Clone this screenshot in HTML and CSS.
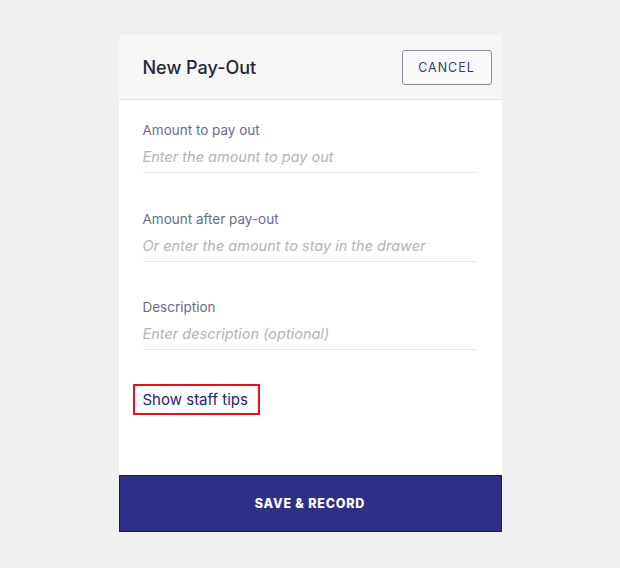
FILE: index.html
```html
<!DOCTYPE html>
<html>
<head>
<meta charset="utf-8">
<link rel="stylesheet" href="styles.css">
</head>
<body>
<div class="card">
  <div class="header">
    <h1 class="title">New Pay-Out</h1>
    <button class="cancel">CANCEL</button>
  </div>
  <div class="body">
    <div class="field">
      <div class="label">Amount to pay out</div>
      <div class="input">Enter the amount to pay out</div>
    </div>
    <div class="field">
      <div class="label">Amount after pay-out</div>
      <div class="input">Or enter the amount to stay in the drawer</div>
    </div>
    <div class="field">
      <div class="label">Description</div>
      <div class="input">Enter description (optional)</div>
    </div>
    <a class="tips">Show staff tips</a>
  </div>
  <button class="save">SAVE &amp; RECORD</button>
</div>
</body>
</html>
```
FILE: styles.css
```css
html, body {
  margin: 0;
  padding: 0;
  background: #f0f0f0;
  font-family: "Inter", "Lato", sans-serif;
}
body {
  height: 568px;
  padding-top: 35px;
  box-sizing: border-box;
}
.card {
  width: 383px;
  margin: 0 auto;
  background: #fff;
  display: flex;
  flex-direction: column;
}
.header {
  height: 64px;
  background: #f7f7f7;
  border-bottom: 1px solid #e4e4e4;
  display: flex;
  align-items: center;
  justify-content: space-between;
  padding: 0 10px 0 24px;
}
.title {
  margin: 0;
  font-size: 18px;
  font-weight: 500;
  color: #26263a;
}
.cancel {
  width: 90px;
  height: 35px;
  border: 1px solid #8c8c9e;
  border-radius: 3px;
  background: #fafafa;
  color: #3a3a58;
  font-family: inherit;
  font-size: 12.5px;
  letter-spacing: 1px;
  padding: 0;
}
.body {
  height: 375px;
  box-sizing: border-box;
  padding: 21px 26px 0 24px;
  display: flex;
  flex-direction: column;
}
.field {
  border-bottom: 1px solid #e6e6e6;
  margin-bottom: 36.5px;
  padding-bottom: 5px;
}
.field:last-of-type {
  margin-bottom: 34px;
}
.label {
  font-size: 13.5px;
  color: #6c6c86;
  line-height: 18px;
  margin-bottom: 8px;
}
.input {
  font-size: 14.5px;
  font-style: italic;
  color: #b4b4b4;
  line-height: 20px;
}
.tips {
  align-self: flex-start;
  margin: 0 0 0 -10px;
  padding: 4px 10px 4px 8px;
  border: 2px solid #e8121b;
  font-size: 15px;
  color: #24247a;
  line-height: 19px;
}
.save {
  height: 57px;
  background: #2e3087;
  border: 1px solid #14167e;
  color: #fff;
  font-family: inherit;
  font-weight: 800;
  font-size: 12.5px;
  letter-spacing: 0.8px;
  padding: 0;
}
```
